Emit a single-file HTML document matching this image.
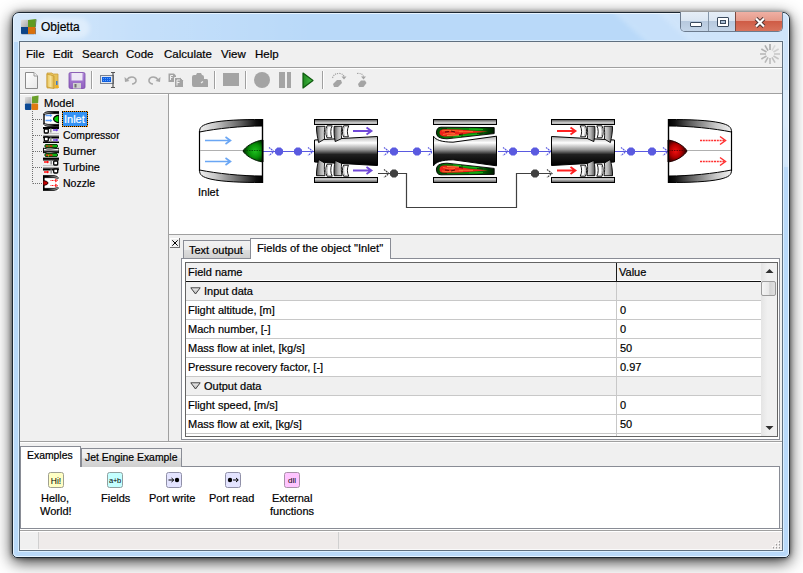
<!DOCTYPE html>
<html><head><meta charset="utf-8">
<style>
*{box-sizing:border-box}
html,body{margin:0;padding:0;width:803px;height:573px;overflow:hidden;background:#fff;font-family:"Liberation Sans",sans-serif;font-size:11px;color:#000}
.a{position:absolute}
.t{position:absolute;white-space:pre;line-height:1;-webkit-text-stroke:0.2px #000}
#shadow{left:12px;top:12px;width:778px;height:546px;border-radius:7px 7px 5px 5px;box-shadow:0 0 4px 0 rgba(0,0,0,0.5),0 4px 16px 0 rgba(0,0,0,0.8)}
#win{left:12px;top:12px;width:778px;height:546px;border:1px solid #1c2630;border-radius:7px 7px 5px 5px;background:#b9d9f9;overflow:hidden}
#win .hl{left:0;top:0;right:0;bottom:0;border:1px solid #e6f3ff;border-radius:6px 6px 4px 4px}
#client{left:19px;top:41px;width:764px;height:510px;border:1px solid #5f6f7f;background:#f0f0f0}
.hline{position:absolute;height:1px}
.vline{position:absolute;width:1px}
</style></head><body>
<div id="shadow" class="a"></div>
<div id="win" class="a"><div class="a hl"></div>
<div class="a" style="left:1px;top:1px;width:300px;height:28px;background:linear-gradient(90deg,rgba(255,255,255,0.42),rgba(255,255,255,0.18) 40%,rgba(255,255,255,0))"></div>
<div class="a" style="left:23px;top:5px;width:54px;height:20px;border-radius:10px;background:rgba(255,255,255,0.35);filter:blur(2px)"></div>
<svg class="a" style="left:-13px;top:-13px" width="803" height="573" viewBox="0 0 803 573"><defs><filter id="fb" x="-20%" y="-20%" width="140%" height="140%"><feGaussianBlur stdDeviation="2"/></filter></defs>
<polygon points="606,6 806,6 806,184" fill="#fff" opacity="0.2" filter="url(#fb)"/>
<polygon points="650,6 806,6 806,148" fill="#fff" opacity="0.15" filter="url(#fb)"/>
<rect x="782" y="90" width="8" height="77" fill="#fff" opacity="0.25"/>
</svg>
<div class="a" style="left:5px;top:27px;width:766px;height:512px;border:1px solid #dbeefe"></div>
</div>
<div id="client" class="a"></div>
<!-- title -->
<div class="t" style="left:41px;top:21px;font-size:12px;color:#000">Objetta</div>
<!-- menu -->
<div class="t" style="left:26px;top:49px;font-size:11.5px">File</div>
<div class="t" style="left:53px;top:49px;font-size:11.5px">Edit</div>
<div class="t" style="left:82px;top:49px;font-size:11.5px">Search</div>
<div class="t" style="left:126px;top:49px;font-size:11.5px">Code</div>
<div class="t" style="left:164px;top:49px;font-size:11.5px">Calculate</div>
<div class="t" style="left:221px;top:49px;font-size:11.5px">View</div>
<div class="t" style="left:255px;top:49px;font-size:11.5px">Help</div>
<div class="hline" style="left:20px;top:67px;width:762px;background:#a0a0a0"></div>
<div class="hline" style="left:20px;top:68px;width:762px;background:#fff"></div>
<div class="hline" style="left:20px;top:93px;width:762px;background:#a0a0a0"></div>
<div class="hline" style="left:20px;top:94px;width:762px;background:#fff"></div>
<!-- canvas -->
<div class="a" style="left:168px;top:94px;width:614px;height:141px;background:#fff;border-left:1px solid #a0a0a0;border-bottom:1px solid #a0a0a0"></div>
<div class="vline" style="left:168px;top:235px;height:206px;background:#a0a0a0"></div>
<div class="hline" style="left:20px;top:441px;width:762px;background:#a0a0a0"></div>
<div class="hline" style="left:20px;top:442px;width:762px;background:#fff"></div>
<!-- status bar -->
<div class="hline" style="left:20px;top:528px;width:762px;background:#a0a0a0"></div>

<!-- app icon -->
<svg class="a" style="left:20px;top:18px" width="17" height="17" viewBox="0 0 17 17">
<defs><linearGradient id="gq" x1="0" y1="0" x2="1" y2="1"><stop offset="0" stop-color="#e0e0e0"/><stop offset="1" stop-color="#a8a8a8"/></linearGradient></defs>
<path d="M1 2.5 Q1 1.8 1.8 1.8 H8 V9 H1 Z" fill="url(#gq)"/>
<path d="M8 2 L15.8 1 L15.2 9 L8 9 Z" fill="#5e9a22"/>
<path d="M15.8 1 L16.4 1.6 L15.8 9.5 L15.2 9 Z" fill="#3a5a18"/>
<path d="M1 9 H8 V16 H1.8 Q1 16 1 15.2 Z" fill="#0c4488"/>
<path d="M8 9 H15.2 V15.2 Q15.2 16 14.4 16 H8 Z" fill="#d8700c"/>
<path d="M15.2 9.5 L15.9 10 V16 L15.2 16.5 Z" fill="#7a4a20"/>
<path d="M1.5 16.3 H14.5" stroke="#5a6a80" stroke-width="0.6" opacity="0.6"/>
</svg>
<!-- caption buttons -->
<div class="a" style="left:680px;top:12px;width:103px;height:20px;border:1px solid #6c7b8e;border-top:none;border-radius:0 0 5px 5px;overflow:hidden">
 <div class="a" style="left:0;top:0;width:28px;height:19px;background:linear-gradient(#e6eef7 0,#dbe6f2 45%,#b7c9de 50%,#c4d5e8 100%);border-right:1px solid #8495a8"></div>
 <div class="a" style="left:28px;top:0;width:27px;height:19px;background:linear-gradient(#e6eef7 0,#dbe6f2 45%,#b7c9de 50%,#c4d5e8 100%);border-right:1px solid #7a4a40"></div>
 <div class="a" style="left:55px;top:0;width:47px;height:19px;background:linear-gradient(#efb0a4 0,#e59a8a 45%,#cf5c46 50%,#d8735c 100%)"></div>
 <div class="a" style="left:9px;top:10px;width:12px;height:5px;background:#fff;border:1px solid #3a4a5e;border-radius:1px"></div>
 <div class="a" style="left:36px;top:5px;width:12px;height:10px;background:#fff;border:1px solid #3a4a5e;border-radius:1px"><div class="a" style="left:2px;top:2px;width:6px;height:4px;background:#a9bdd3;border:1px solid #3a4a5e"></div></div>
 <svg class="a" style="left:73px;top:5px" width="12" height="11" viewBox="0 0 12 11"><path d="M2 1.5 L10 9.5 M10 1.5 L2 9.5" stroke="#4a3030" stroke-width="4" stroke-linecap="butt"/><path d="M2 1.5 L10 9.5 M10 1.5 L2 9.5" stroke="#fff" stroke-width="2.2" stroke-linecap="butt"/></svg>
</div>
<!-- spinner -->
<svg class="a" style="left:759px;top:43px" width="22" height="22" viewBox="-11 -11 22 22">
<g stroke-width="1.6" stroke-linecap="butt">
<line x1="0" y1="-4" x2="0" y2="-10" stroke="#a8a8a8" transform="rotate(0)"/>
<line x1="0" y1="-4" x2="0" y2="-10" stroke="#d8d8d8" transform="rotate(30)"/>
<line x1="0" y1="-4" x2="0" y2="-10" stroke="#d0d0d0" transform="rotate(60)"/>
<line x1="0" y1="-4" x2="0" y2="-10" stroke="#c8c8c8" transform="rotate(90)"/>
<line x1="0" y1="-4" x2="0" y2="-10" stroke="#c4c4c4" transform="rotate(120)"/>
<line x1="0" y1="-4" x2="0" y2="-10" stroke="#c0c0c0" transform="rotate(150)"/>
<line x1="0" y1="-4" x2="0" y2="-10" stroke="#bcbcbc" transform="rotate(180)"/>
<line x1="0" y1="-4" x2="0" y2="-10" stroke="#b8b8b8" transform="rotate(210)"/>
<line x1="0" y1="-4" x2="0" y2="-10" stroke="#b4b4b4" transform="rotate(240)"/>
<line x1="0" y1="-4" x2="0" y2="-10" stroke="#b8b8b8" transform="rotate(270)"/>
<line x1="0" y1="-4" x2="0" y2="-10" stroke="#b0b0b0" transform="rotate(300)"/>
<line x1="0" y1="-4" x2="0" y2="-10" stroke="#acacac" transform="rotate(330)"/>
</g></svg>

<!-- toolbar -->
<svg class="a" style="left:24px;top:72px" width="15" height="17" viewBox="0 0 15 17">
<defs><linearGradient id="gdoc" x1="0" y1="0" x2="1" y2="1"><stop offset="0" stop-color="#fff"/><stop offset="1" stop-color="#e8e8e8"/></linearGradient></defs>
<path d="M1.5 0.5 H10 L13.5 4 V16.5 H1.5 Z" fill="url(#gdoc)" stroke="#8a8a8a"/>
<path d="M10 0.5 V4 H13.5" fill="#f4f4f4" stroke="#9a9a9a"/>
</svg>
<svg class="a" style="left:46px;top:72px" width="15" height="17" viewBox="0 0 15 17">
<defs><linearGradient id="gfold" x1="0" y1="0" x2="1" y2="0"><stop offset="0" stop-color="#e8c45a"/><stop offset="0.5" stop-color="#f6e29a"/><stop offset="1" stop-color="#d9ae40"/></linearGradient></defs>
<path d="M1 1 H6 L7 2 H12 V16 H1 Z" fill="#e6c25a" stroke="#caa040" stroke-width="0.8"/>
<path d="M1 2 L8 4 V16.5 L1 15 Z" fill="url(#gfold)" stroke="#c89a30" stroke-width="0.8"/>
<rect x="10" y="9" width="1.5" height="5" fill="#3a7ad0"/><path d="M9 13 L12 13 L13 16 L10 16 Z" fill="#f0b020"/>
</svg>
<svg class="a" style="left:68px;top:72px" width="18" height="17" viewBox="0 0 18 17">
<defs><linearGradient id="gfl" x1="0" y1="0" x2="0" y2="1"><stop offset="0" stop-color="#b088d8"/><stop offset="1" stop-color="#9060c0"/></linearGradient></defs>
<rect x="1" y="0.5" width="16" height="16" rx="1.5" fill="url(#gfl)" stroke="#7a4aa8" stroke-width="0.8"/>
<rect x="3.5" y="1" width="11" height="7.5" fill="#eee8f6"/>
<rect x="5" y="11" width="8" height="5.5" fill="#d0d0d0"/><rect x="6.5" y="12" width="2" height="3.5" fill="#707070"/>
</svg>
<div class="vline" style="left:91px;top:71px;height:18px;background:#a0a0a0"></div>
<div class="vline" style="left:92px;top:71px;height:18px;background:#fff"></div>
<svg class="a" style="left:100px;top:72px" width="17" height="16" viewBox="0 0 17 16">
<rect x="0.5" y="3.5" width="13" height="8" fill="#e0e6f0" stroke="#7a8290"/>
<rect x="2" y="5" width="9" height="5" fill="#1060e0"/>
<path d="M3 6.5 H10 M3 8.5 H10" stroke="#6aa8ff" stroke-width="0.8" stroke-dasharray="1 1"/>
<path d="M11 0.5 H15 M13 0.5 V15.5 M11 15.5 H15" stroke="#555" stroke-width="1.2" fill="none"/>
</svg>
<svg class="a" style="left:124px;top:75px" width="14" height="10" viewBox="0 0 14 10">
<path d="M3 5 C5 1 11 1 12 5 C12.5 7.5 10 9 8 9" stroke="#a8a8a8" stroke-width="1.6" fill="none"/>
<path d="M0.5 2 L1 7 L5.5 6 Z" fill="#a8a8a8"/>
</svg>
<svg class="a" style="left:147px;top:75px" width="14" height="10" viewBox="0 0 14 10">
<path d="M11 5 C9 1 3 1 2 5 C1.5 7.5 4 9 6 9" stroke="#a8a8a8" stroke-width="1.6" fill="none"/>
<path d="M13.5 2 L13 7 L8.5 6 Z" fill="#a8a8a8"/>
</svg>
<svg class="a" style="left:168px;top:73px" width="17" height="15" viewBox="0 0 17 15">
<path d="M0.5 0.5 H6 L8 2.5 V9 H0.5 Z" fill="#a4a4a4"/>
<path d="M6.5 4.5 H12.5 L15.5 7.5 V14.5 H6.5 Z" fill="#a4a4a4" stroke="#f0f0f0" stroke-width="1"/>
<path d="M2.5 2.5 H5 M2.5 2.5 V7 M2.5 4.5 H4.5" stroke="#f0f0f0" stroke-width="1"/>
<path d="M9 7 H12 M9 7 V12.5 M9 9.5 H11.5" stroke="#f0f0f0" stroke-width="1"/>
</svg>
<svg class="a" style="left:191px;top:73px" width="18" height="15" viewBox="0 0 18 15">
<path d="M1 4 Q1 2 3 2 H5 L6 0 H10 L11 2 Q13 2 13 4 V6 H16 Q17 6 17 8 V14 H3 Q1 14 1 12 Z" fill="#a4a4a4"/>
<path d="M10 10 L12 8.5" stroke="#f0f0f0" stroke-width="1.2"/>
</svg>
<div class="vline" style="left:214px;top:71px;height:18px;background:#a0a0a0"></div>
<div class="vline" style="left:215px;top:71px;height:18px;background:#fff"></div>
<div class="a" style="left:223px;top:73px;width:16px;height:13px;background:#a4a4a4"></div>
<div class="vline" style="left:245px;top:71px;height:18px;background:#a0a0a0"></div>
<div class="vline" style="left:246px;top:71px;height:18px;background:#fff"></div>
<div class="a" style="left:254px;top:72px;width:16px;height:16px;border-radius:50%;background:#a4a4a4"></div>
<div class="a" style="left:279px;top:72px;width:6px;height:16px;background:#a4a4a4"></div>
<div class="a" style="left:287px;top:72px;width:4px;height:16px;background:#a4a4a4"></div>
<svg class="a" style="left:302px;top:72px" width="12" height="17" viewBox="0 0 12 17">
<defs><linearGradient id="gplay" x1="0" y1="0" x2="1" y2="0"><stop offset="0" stop-color="#1e8a1e"/><stop offset="1" stop-color="#4cc04c"/></linearGradient></defs>
<path d="M1 1 L11 8.5 L1 16 Z" fill="url(#gplay)" stroke="#0e5a0e" stroke-width="1.2" stroke-linejoin="round"/>
</svg>
<div class="vline" style="left:322px;top:71px;height:18px;background:#a0a0a0"></div>
<div class="vline" style="left:323px;top:71px;height:18px;background:#fff"></div>
<svg class="a" style="left:331px;top:72px" width="16" height="16" viewBox="0 0 16 16">
<path d="M1.5 6 Q3 1 9 1.5 Q12.5 2 13 5" stroke="#a4a4a4" stroke-width="1.2" stroke-dasharray="1.2 1" fill="none"/>
<path d="M10.5 4.5 L13 7.5 L15.5 4.5 Z" fill="#a4a4a4"/>
<path d="M2 12 L6 8 H10 L11 11 L7 15 H3 Z" fill="#a4a4a4"/>
</svg>
<svg class="a" style="left:356px;top:72px" width="12" height="16" viewBox="0 0 12 16">
<path d="M1 1.5 Q7 1 7.5 5" stroke="#a4a4a4" stroke-width="1.2" stroke-dasharray="1.2 1" fill="none"/>
<path d="M5 4.5 L7.5 7.5 L10 4.5 Z" fill="#a4a4a4"/>
<path d="M2 12 L5 8.5 H9 L10.5 11 L7.5 15 H3 Z" fill="#a4a4a4"/>
</svg>

<!-- symbols -->
<svg width="0" height="0" style="position:absolute">
<defs>
<linearGradient id="gband" x1="0" y1="0" x2="1" y2="0"><stop offset="0" stop-color="#f0f0f0"/><stop offset="0.25" stop-color="#c8c8c8"/><stop offset="0.65" stop-color="#606060"/><stop offset="0.9" stop-color="#101010"/><stop offset="1" stop-color="#000"/></linearGradient>
<linearGradient id="gbandr" x1="1" y1="0" x2="0" y2="0"><stop offset="0" stop-color="#f0f0f0"/><stop offset="0.25" stop-color="#c8c8c8"/><stop offset="0.65" stop-color="#606060"/><stop offset="0.9" stop-color="#101010"/><stop offset="1" stop-color="#000"/></linearGradient>
<radialGradient id="gcone" cx="0.6" cy="0.5" r="0.55"><stop offset="0" stop-color="#20c020"/><stop offset="0.55" stop-color="#089008"/><stop offset="1" stop-color="#003000"/></radialGradient>
<radialGradient id="gconer" cx="0.4" cy="0.5" r="0.55"><stop offset="0" stop-color="#f01010"/><stop offset="0.55" stop-color="#b00000"/><stop offset="1" stop-color="#300000"/></radialGradient>
<linearGradient id="gbar" x1="0" y1="0" x2="0" y2="1"><stop offset="0" stop-color="#505050"/><stop offset="0.7" stop-color="#d8d8d8"/><stop offset="1" stop-color="#909090"/></linearGradient>
<linearGradient id="gbarb" x1="0" y1="1" x2="0" y2="0"><stop offset="0" stop-color="#505050"/><stop offset="0.7" stop-color="#d8d8d8"/><stop offset="1" stop-color="#909090"/></linearGradient>
<linearGradient id="ghub" x1="0" y1="0" x2="0" y2="1"><stop offset="0" stop-color="#b0b0b0"/><stop offset="0.22" stop-color="#ffffff"/><stop offset="0.45" stop-color="#9a9a9a"/><stop offset="0.62" stop-color="#202020"/><stop offset="1" stop-color="#000"/></linearGradient>
<linearGradient id="gpod" x1="0" y1="0" x2="1" y2="0"><stop offset="0" stop-color="#004000"/><stop offset="0.15" stop-color="#087808"/><stop offset="0.7" stop-color="#0a8a0a"/><stop offset="0.9" stop-color="#003a00"/><stop offset="1" stop-color="#001a00"/></linearGradient>
<linearGradient id="gblade" x1="0" y1="0" x2="1" y2="0"><stop offset="0" stop-color="#505050"/><stop offset="0.5" stop-color="#b0b0b0"/><stop offset="1" stop-color="#e0e0e0"/></linearGradient>
<symbol id="sInlet" viewBox="0 0 64 64" overflow="visible">
<rect x="0.5" y="8" width="63" height="48" fill="#fff"/>
<path d="M0.5 12 V52" stroke="#000" stroke-width="1.2"/>
<path d="M1 31.5 H46" stroke="#b0b0b0" stroke-width="1"/>
<path d="M6 21.5 H31 M26.5 18 L31.5 21.5 L26.5 25 M6 42.5 H31 M26.5 39 L31.5 42.5 L26.5 46" stroke="#6aa6f4" stroke-width="1.6" fill="none"/>
<path d="M64 21 C55 22 46 28 44 32 C46 36 55 42 64 43 Z" fill="url(#gcone)" stroke="#001800" stroke-width="1"/><path d="M45 31.5 H63" stroke="#004000" stroke-width="0.8" stroke-dasharray="1.5 1"/>
<path d="M0.5 13 C0.5 8 3 6 12 3.8 C24 1.2 42 0.5 63.5 0.5 V7 C42 7 18 9.5 0.5 13 Z" fill="url(#gband)" stroke="#000" stroke-width="1"/>
<path d="M0.5 51 C0.5 56 3 58 12 60.2 C24 62.8 42 63.5 63.5 63.5 V57 C42 57 18 54.5 0.5 51 Z" fill="url(#gband)" stroke="#000" stroke-width="1"/>
<path d="M63.5 0 V64" stroke="#000" stroke-width="1.4"/>
</symbol>
<symbol id="sNozzle" viewBox="0 0 64 64" overflow="visible">
<rect x="0.5" y="8" width="63" height="48" fill="#fff"/>
<path d="M63.5 12 V52" stroke="#000" stroke-width="1.2"/>
<path d="M18 31.5 H63" stroke="#b0b0b0" stroke-width="1"/>
<path d="M32 21.5 H57 M32 42.5 H57" stroke="#ff3030" stroke-width="1.5" stroke-dasharray="2 0.8" fill="none"/><path d="M52 17.5 L57.5 21.5 L52 25.5 M52 38.5 L57.5 42.5 L52 46.5" stroke="#ff3030" stroke-width="1.5" fill="none"/>
<path d="M0 21 C9 22 17 28 19 32 C17 36 9 42 0 43 Z" fill="url(#gconer)" stroke="#200000" stroke-width="1"/><path d="M1 31.5 H18" stroke="#500000" stroke-width="0.8" stroke-dasharray="1.5 1"/>
<path d="M63.5 13 C63.5 8 61 6 52 3.8 C40 1.2 22 0.5 0.5 0.5 V7 C22 7 46 9.5 63.5 13 Z" fill="url(#gbandr)" stroke="#000" stroke-width="1"/>
<path d="M63.5 51 C63.5 56 61 58 52 60.2 C40 62.8 22 63.5 0.5 63.5 V57 C22 57 46 54.5 63.5 51 Z" fill="url(#gbandr)" stroke="#000" stroke-width="1"/>
<path d="M0.5 0 V64" stroke="#000" stroke-width="1.4"/>
</symbol>
<g id="bladesC">
<path d="M2.5 7.3 H11 C10.2 11 10.2 16 10.6 20 L4.6 23.6 C3.4 18 2.2 12 2.5 7.3 Z" fill="url(#gblade)" stroke="#000" stroke-width="0.9"/>
<path d="M13 6.8 H18.2 C16.4 10 16.4 15 17.8 18.8 H13 C11.4 15 11.4 10 13 6.8 Z" fill="#f8f8f8" stroke="#000" stroke-width="0.9"/><path d="M13.8 8 C12.8 11 12.8 14.5 13.8 17.6" stroke="#b0b0b0" stroke-width="1" fill="none"/>
<path d="M20.2 7.3 H28 C27.2 11 27.2 15.5 27.6 19.6 L21.2 22.6 C20 17.5 19.8 12 20.2 7.3 Z" fill="url(#gblade)" stroke="#000" stroke-width="0.9"/>
<path d="M29.6 6.8 H34.8 C33 10 33 14.5 34.4 17.8 H29.6 C28 14.5 28 10 29.6 6.8 Z" fill="#f8f8f8" stroke="#000" stroke-width="0.9"/><path d="M30.4 8 C29.4 11 29.4 14 30.4 16.8" stroke="#b0b0b0" stroke-width="1" fill="none"/>
</g>
<symbol id="sComp" viewBox="0 0 64 64" overflow="visible">
<path d="M0.5 21 L63.5 17.5 V46.5 L0.5 43 Z" fill="url(#ghub)" stroke="#000" stroke-width="1"/>
<use href="#bladesC"/>
<use href="#bladesC" transform="matrix(1 0 0 -1 0 64)"/>
<rect x="0.5" y="0.5" width="63" height="5" fill="url(#gbar)" stroke="#000" stroke-width="1"/>
<rect x="0.5" y="58.5" width="63" height="5" fill="url(#gbarb)" stroke="#000" stroke-width="1"/>
</symbol>
<symbol id="sTurb" viewBox="0 0 64 64" overflow="visible">
<g transform="matrix(-1 0 0 1 64 0)">
<path d="M0.5 21 L63.5 17.5 V46.5 L0.5 43 Z" fill="url(#ghub)" stroke="#000" stroke-width="1"/>
<use href="#bladesC"/>
<use href="#bladesC" transform="matrix(1 0 0 -1 0 64)"/>
</g>
<rect x="0.5" y="0.5" width="63" height="5" fill="url(#gbar)" stroke="#000" stroke-width="1"/>
<rect x="0.5" y="58.5" width="63" height="5" fill="url(#gbarb)" stroke="#000" stroke-width="1"/>
</symbol>
<g id="pod">
<path d="M8 8.2 L61.2 8.6 V14.6 L14 19.8 Q3.4 19.8 3.4 14 Q3.4 8.2 8 8.2 Z" fill="url(#gpod)" stroke="#000" stroke-width="0.9"/>
<path d="M30 16.5 L46 15 M36 10 L50 10.5 M20 18 L28 17.6" stroke="#20c020" stroke-width="1.2" opacity="0.8"/><path d="M8 10 L14 9.6 M44 14.5 L50 14" stroke="#002000" stroke-width="1" opacity="0.7"/>
<path d="M6.5 13.8 Q6.5 10.2 11 10.2 L26 10.4 Q40 11.5 55 12.8 L36 14.2 Q28 15.5 20 17.2 L11.5 17.4 Q6.5 17.2 6.5 13.8 Z" fill="#f02018"/>
<path d="M9 12 Q14 10.8 20 11.6 T30 12 M10 15.5 Q15 13.5 22 14.5 M26 12.8 L40 12.6" stroke="#ffa040" stroke-width="0.6" fill="none"/>
<path d="M12 13 L16 12.6 M26 15.6 L30 15 M18 12 L22 13" stroke="#300000" stroke-width="0.8" fill="none"/>
<path d="M14 16.4 Q20 15.8 26 16.2" stroke="#ffe060" stroke-width="0.6" fill="none"/>
</g>
<symbol id="sBurn" viewBox="0 0 64 64" overflow="visible">
<use href="#pod"/>
<use href="#pod" transform="matrix(1 0 0 -1 0 64)"/>
<path d="M0.5 17.2 C3 21 8 23 20 23.2 L63.5 17.2 V46.8 L20 40.8 C8 41 3 43 0.5 46.8 Z" fill="url(#ghub)" stroke="#fff" stroke-width="3"/>
<path d="M0.5 17.2 C3 21 8 23 20 23.2 L63.5 17.2 V46.8 L20 40.8 C8 41 3 43 0.5 46.8 Z" fill="url(#ghub)" stroke="#000" stroke-width="1"/>
<rect x="0.5" y="0.5" width="63" height="5" fill="url(#gbar)" stroke="#000" stroke-width="1"/>
<rect x="0.5" y="58.5" width="63" height="5" fill="url(#gbarb)" stroke="#000" stroke-width="1"/>
</symbol>
<g id="dotB"><path d="M-1.7 -4 H1.7 L4 -1.7 V1.7 L1.7 4 H-1.7 L-4 1.7 V-1.7 Z" fill="#5a5ae0"/></g>
<g id="dotK"><path d="M-1.7 -4 H1.7 L4 -1.7 V1.7 L1.7 4 H-1.7 L-4 1.7 V-1.7 Z" fill="#404040"/></g>
<g id="arrB"><path d="M-5 -4 L0 0 L-5 4" stroke="#5a5ae0" stroke-width="1.2" fill="none" stroke-dasharray="1.8 0.7"/></g>
<g id="arrK"><path d="M-5 -4 L0 0 L-5 4" stroke="#404040" stroke-width="1.2" fill="none" stroke-dasharray="1.8 0.7"/></g>
</defs></svg>
<!-- diagram -->
<svg class="a" style="left:169px;top:94px" width="613" height="140" viewBox="169 94 613 140">
<path d="M263 151.5 H314 M378 151.5 H433 M497 151.5 H551 M615 151.5 H668" stroke="#5a5ae0" stroke-width="1.2"/>
<path d="M378 173.5 H406.5 V207.5 H516.5 V173.5 H551" stroke="#404040" stroke-width="1.2" fill="none"/>
<use href="#arrB" x="274" y="151.5"/><use href="#dotB" x="279" y="151.5"/><use href="#dotB" x="298" y="151.5"/><use href="#arrB" x="313" y="151.5"/>
<use href="#arrB" x="389" y="151.5"/><use href="#dotB" x="394" y="151.5"/><use href="#dotB" x="417" y="151.5"/><use href="#arrB" x="433" y="151.5"/>
<use href="#arrB" x="508" y="151.5"/><use href="#dotB" x="513" y="151.5"/><use href="#dotB" x="535" y="151.5"/><use href="#arrB" x="551" y="151.5"/>
<use href="#arrB" x="626" y="151.5"/><use href="#dotB" x="631" y="151.5"/><use href="#dotB" x="652" y="151.5"/><use href="#arrB" x="668" y="151.5"/>
<use href="#arrK" x="389" y="173.5"/><use href="#dotK" x="394" y="173.5"/><use href="#dotK" x="535" y="173.5"/><use href="#arrK" x="552" y="173.5"/>
<use href="#sInlet" x="199" y="119" width="64" height="64"/>
<use href="#sComp" x="314" y="119" width="64" height="64"/>
<use href="#sBurn" x="433" y="119" width="64" height="64"/>
<use href="#sTurb" x="551" y="119" width="64" height="64"/>
<use href="#sNozzle" x="668" y="119" width="64" height="64"/>
<path d="M353 131 H371 M366.5 127.5 L371.5 131 L366.5 134.5 M353 170.5 H371 M366.5 167 L371.5 170.5 L366.5 174" stroke="#7048d8" stroke-width="1.8" fill="none"/>
<path d="M557 131 H575 M570.5 127.5 L575.5 131 L570.5 134.5 M557 170.5 H575 M570.5 167 L575.5 170.5 L570.5 174" stroke="#ff2020" stroke-width="1.8" fill="none"/>
</svg>
<div class="t" style="left:198px;top:187px;font-size:11px">Inlet</div>

<!-- tree -->
<svg class="a" style="left:24px;top:95px" width="16" height="16" viewBox="0 0 17 17">
<rect x="1" y="2" width="7" height="7" rx="1" fill="url(#gq)"/>
<path d="M8.5 1.5 L15.5 0.5 L15 8.5 L8.5 9 Z" fill="#6aa02a"/>
<rect x="1" y="9" width="7" height="7" rx="1" fill="#0d4a94"/>
<rect x="8" y="9" width="7" height="7" rx="1" fill="#e07a10"/>
</svg>
<div class="t" style="left:44px;top:98px;font-size:11px">Model</div>
<svg class="a" style="left:32px;top:111px" width="12" height="74" viewBox="0 0 12 74">
<path d="M0.5 0 V72.5 M1 8.5 H11 M1 24.5 H11 M1 40.5 H11 M1 56.5 H11 M1 72.5 H11" stroke="#707070" stroke-width="1" stroke-dasharray="1 1" fill="none"/>
</svg>
<svg class="a" style="left:43px;top:111px" width="16" height="16" viewBox="0 0 16 16">
<defs><linearGradient id="tb1" x1="0" y1="0" x2="1" y2="0"><stop offset="0" stop-color="#d0d0d0"/><stop offset="0.4" stop-color="#606060"/><stop offset="0.7" stop-color="#000"/></linearGradient>
<linearGradient id="thub" x1="0" y1="0" x2="0" y2="1"><stop offset="0" stop-color="#b0b0b0"/><stop offset="0.3" stop-color="#f4f4f4"/><stop offset="0.55" stop-color="#707070"/><stop offset="0.8" stop-color="#000"/></linearGradient></defs>
<rect x="0" y="0" width="16" height="16" fill="#fff"/>
<path d="M0.5 3 Q1 1 5 0.6 H16 V2.6 H5 Q2 3 1.5 4 Z" fill="url(#tb1)" stroke="#000" stroke-width="0.8"/>
<path d="M0.5 13 Q1 15 5 15.4 H16 V13.4 H5 Q2 13 1.5 12 Z" fill="url(#tb1)" stroke="#000" stroke-width="0.8"/>
<path d="M1 3 V13" stroke="#000" stroke-width="1.4"/>
<path d="M2.5 4.5 H8.5 M2.5 9.5 H8.5" stroke="#60a0f8" stroke-width="1.6"/>
<path d="M7 3 L9.5 4.5 L7 6 Z M7 8 L9.5 9.5 L7 11 Z" fill="#60a0f8"/>
<path d="M16 4.2 Q11 5 10.6 8 Q11 11 16 11.8 Z" fill="#00d000" stroke="#000" stroke-width="1.3"/>
</svg>
<svg class="a" style="left:43px;top:127px" width="16" height="16" viewBox="0 0 16 16">
<rect x="0" y="0" width="16" height="2" fill="#000"/>
<rect x="0" y="14.5" width="16" height="1.5" fill="#000"/>
<path d="M0 6.8 L1 6 H16 V11.5 H1 L0 10.7 Z" fill="url(#thub)"/>
<rect x="1.3" y="2" width="4" height="4" rx="0.8" fill="#fff" stroke="#000" stroke-width="1.3"/>
<rect x="1.3" y="10" width="4" height="4" rx="0.8" fill="#fff" stroke="#000" stroke-width="1.3"/>
<rect x="7" y="1.5" width="1.6" height="4" fill="#909090"/>
<rect x="7" y="10.5" width="1.6" height="4" fill="#909090"/>
<path d="M10 3 H14.5 M10 13 H14.5" stroke="#7040e0" stroke-width="1.6"/>
<path d="M13 1.5 L15.5 3 L13 4.5 Z M13 11.5 L15.5 13 L13 14.5 Z" fill="#7040e0"/>
</svg>
<svg class="a" style="left:43px;top:143px" width="16" height="16" viewBox="0 0 16 16">
<path d="M2.5 1.5 H14 Q15.5 3 14 4.5 H2.5 Q1 3 2.5 1.5 Z" fill="#10b010" stroke="#003000" stroke-width="0.9"/>
<path d="M2.5 10.5 H14 Q15.5 12 14 13.5 H2.5 Q1 12 2.5 10.5 Z" fill="#10b010" stroke="#003000" stroke-width="0.9"/>
<rect x="3" y="2.5" width="2.5" height="1.2" fill="#ff1010"/><rect x="6.5" y="2.4" width="3" height="1.4" fill="#ff1010"/>
<rect x="3" y="11.4" width="2.5" height="1.4" fill="#ff1010"/><rect x="6.5" y="11.4" width="3" height="1.4" fill="#ff1010"/><rect x="5" y="12.4" width="1" height="1" fill="#ffe000"/>
<path d="M0.5 5 Q4 6.5 8 6 L16 5.2 V9.8 L8 9 Q4 8.5 0.5 10 Z" fill="url(#thub)" stroke="#000" stroke-width="0.9"/>
<rect x="0" y="14.6" width="16" height="1.4" fill="#000"/>
</svg>
<svg class="a" style="left:43px;top:159px" width="16" height="16" viewBox="0 0 16 16">
<rect x="0" y="0" width="16" height="1.6" fill="#202020"/>
<path d="M0 6 H15 L16 6.8 V10.7 L15 11.5 H0 Z" fill="url(#thub)"/>
<rect x="10.7" y="2" width="4" height="4" rx="0.8" fill="#fff" stroke="#000" stroke-width="1.3"/>
<rect x="10.7" y="10" width="4" height="4" rx="0.8" fill="#fff" stroke="#000" stroke-width="1.3"/>
<rect x="7.4" y="1.5" width="1.6" height="4" fill="#909090"/>
<rect x="7.4" y="10.5" width="1.6" height="4" fill="#909090"/>
<path d="M1 3 H5 M1 13 H5" stroke="#ff1010" stroke-width="1.6"/>
<path d="M4 1.5 L6.3 3 L4 4.5 Z M4 11.5 L6.3 13 L4 14.5 Z" fill="#ff1010"/>
</svg>
<svg class="a" style="left:43px;top:175px" width="16" height="16" viewBox="0 0 16 16">
<defs><linearGradient id="tb2" x1="1" y1="0" x2="0" y2="0"><stop offset="0" stop-color="#d0d0d0"/><stop offset="0.4" stop-color="#606060"/><stop offset="0.7" stop-color="#000"/></linearGradient></defs>
<rect x="0" y="0" width="16" height="16" fill="#fff"/>
<path d="M15.5 3 Q15 1 11 0.6 H0 V2.6 H11 Q14 3 14.5 4 Z" fill="url(#tb2)" stroke="#000" stroke-width="0.8"/>
<path d="M15.5 13 Q15 15 11 15.4 H0 V13.4 H11 Q14 13 14.5 12 Z" fill="url(#tb2)" stroke="#000" stroke-width="0.8"/>
<path d="M0.8 2 V14" stroke="#000" stroke-width="1.6"/>
<path d="M0 5.5 Q5 6 5.2 8 Q5 10 0 10.5 Z" fill="#c00000" stroke="#000" stroke-width="0.8"/>
<path d="M7.5 5.5 H13.5 M7.5 10.5 H13.5" stroke="#ff2020" stroke-width="1.2" stroke-dasharray="1 0.5"/>
<path d="M12 4 L14.5 5.5 L12 7 M12 9 L14.5 10.5 L12 12" stroke="#ff2020" stroke-width="1" fill="none"/>
</svg>
<svg class="a" style="left:62px;top:111px" width="26" height="16" viewBox="0 0 26 16"><rect x="0.5" y="0.5" width="25" height="15" fill="#3492f4" stroke="#000" stroke-width="1" shape-rendering="crispEdges"/><rect x="0.5" y="0.5" width="25" height="15" fill="none" stroke="#f0900c" stroke-width="1" stroke-dasharray="1 1" shape-rendering="crispEdges"/></svg>
<div class="t" style="left:64px;top:114px;font-size:11px;color:#fff;-webkit-text-stroke:0.2px #fff">Inlet</div>
<div class="t" style="left:63px;top:131px;font-size:10.4px">Compressor</div>
<div class="t" style="left:63px;top:146px;font-size:11px">Burner</div>
<div class="t" style="left:63px;top:162px;font-size:11px">Turbine</div>
<div class="t" style="left:63px;top:178px;font-size:10.5px">Nozzle</div>

<!-- tabs area -->
<div class="a" style="left:170px;top:238px;width:10px;height:10px;background:#f0f0f0;border-right:1px solid #707070;border-bottom:1px solid #707070;box-shadow:inset 1px 1px 0 #fff"></div>
<svg class="a" style="left:172px;top:240px" width="6" height="6" viewBox="0 0 6 6"><path d="M0.3 0.3 L5.7 5.7 M5.7 0.3 L0.3 5.7" stroke="#000" stroke-width="1"/></svg>
<div class="a" style="left:183px;top:240px;width:68px;height:19px;border:1px solid #898c95;border-bottom:none;background:linear-gradient(#f2f2f2 0,#ebebeb 50%,#dddddd 50%,#cfcfcf 100%)"></div>
<div class="t" style="left:189px;top:245px;font-size:11px">Text output</div>
<div class="a" style="left:181px;top:258px;width:599px;height:182px;border:1px solid #898c95;background:#fff"></div>
<div class="a" style="left:250px;top:238px;width:141px;height:21px;border:1px solid #898c95;border-bottom:none;background:#fff"></div>
<div class="t" style="left:257px;top:243px;font-size:11.2px">Fields of the object "Inlet"</div>
<!-- table -->
<div class="a" style="left:185px;top:262px;width:593px;height:175px;border:1px solid #646464;background:#fff;overflow:hidden">
 <div class="a" style="left:0;top:0;width:575px;height:19px;background:#f0f0f0;border-bottom:1px solid #111"><div class="a" style="left:0;top:17px;width:575px;height:1px;background:#fff"></div></div>
 <div class="vline" style="left:430px;top:0;height:19px;background:#1a1a1a"></div>
 <div class="t" style="left:2px;top:4px;font-size:11px">Field name</div>
 <div class="t" style="left:433px;top:4px;font-size:11px">Value</div>
</div>
<div class="a" style="left:186px;top:282px;width:575px;height:154px;overflow:hidden">
<div class="a" style="left:0px;top:0px;width:575px;height:19px;background:#f0f0f0;border-bottom:1px solid #c8c8c8"></div>
<div class="vline" style="left:430px;top:0px;height:19px;background:#c8c8c8"></div>
<svg class="a" style="left:4px;top:5px" width="11" height="8" viewBox="0 0 11 8"><defs><linearGradient id="gtri" x1="0" y1="0" x2="0" y2="1"><stop offset="0" stop-color="#f0f0f0"/><stop offset="1" stop-color="#b0b0b0"/></linearGradient></defs><path d="M0.8 0.8 H10.2 L5.5 7 Z" fill="url(#gtri)" stroke="#404040" stroke-width="1"/></svg>
<div class="t" style="left:18px;top:4px;font-size:11px">Input data</div>
<div class="a" style="left:0px;top:19px;width:575px;height:19px;background:#fff;border-bottom:1px solid #c8c8c8"></div>
<div class="vline" style="left:430px;top:19px;height:19px;background:#c8c8c8"></div>
<div class="t" style="left:2px;top:23px;font-size:11px">Flight altitude, [m]</div>
<div class="t" style="left:434px;top:23px;font-size:11px">0</div>
<div class="a" style="left:0px;top:38px;width:575px;height:19px;background:#fff;border-bottom:1px solid #c8c8c8"></div>
<div class="vline" style="left:430px;top:38px;height:19px;background:#c8c8c8"></div>
<div class="t" style="left:2px;top:42px;font-size:11px">Mach number, [-]</div>
<div class="t" style="left:434px;top:42px;font-size:11px">0</div>
<div class="a" style="left:0px;top:57px;width:575px;height:19px;background:#fff;border-bottom:1px solid #c8c8c8"></div>
<div class="vline" style="left:430px;top:57px;height:19px;background:#c8c8c8"></div>
<div class="t" style="left:2px;top:61px;font-size:11px">Mass flow at inlet, [kg/s]</div>
<div class="t" style="left:434px;top:61px;font-size:11px">50</div>
<div class="a" style="left:0px;top:76px;width:575px;height:19px;background:#fff;border-bottom:1px solid #c8c8c8"></div>
<div class="vline" style="left:430px;top:76px;height:19px;background:#c8c8c8"></div>
<div class="t" style="left:2px;top:80px;font-size:11px">Pressure recovery factor, [-]</div>
<div class="t" style="left:434px;top:80px;font-size:11px">0.97</div>
<div class="a" style="left:0px;top:95px;width:575px;height:19px;background:#f0f0f0;border-bottom:1px solid #c8c8c8"></div>
<div class="vline" style="left:430px;top:95px;height:19px;background:#c8c8c8"></div>
<svg class="a" style="left:4px;top:100px" width="11" height="8" viewBox="0 0 11 8"><defs><linearGradient id="gtri" x1="0" y1="0" x2="0" y2="1"><stop offset="0" stop-color="#f0f0f0"/><stop offset="1" stop-color="#b0b0b0"/></linearGradient></defs><path d="M0.8 0.8 H10.2 L5.5 7 Z" fill="url(#gtri)" stroke="#404040" stroke-width="1"/></svg>
<div class="t" style="left:18px;top:99px;font-size:11px">Output data</div>
<div class="a" style="left:0px;top:114px;width:575px;height:19px;background:#fff;border-bottom:1px solid #c8c8c8"></div>
<div class="vline" style="left:430px;top:114px;height:19px;background:#c8c8c8"></div>
<div class="t" style="left:2px;top:118px;font-size:11px">Flight speed, [m/s]</div>
<div class="t" style="left:434px;top:118px;font-size:11px">0</div>
<div class="a" style="left:0px;top:133px;width:575px;height:19px;background:#fff;border-bottom:1px solid #c8c8c8"></div>
<div class="vline" style="left:430px;top:133px;height:19px;background:#c8c8c8"></div>
<div class="t" style="left:2px;top:137px;font-size:11px">Mass flow at exit, [kg/s]</div>
<div class="t" style="left:434px;top:137px;font-size:11px">50</div>
<div class="a" style="left:0px;top:152px;width:575px;height:19px;background:#fff;border-bottom:1px solid #c8c8c8"></div>
<div class="vline" style="left:430px;top:152px;height:19px;background:#c8c8c8"></div>

</div>
<!-- scrollbar -->
<div class="a" style="left:761px;top:263px;width:16px;height:173px;background:linear-gradient(90deg,#e4e4e4,#f0f0f0 40%,#f0f0f0)"></div>
<svg class="a" style="left:765px;top:268px" width="9" height="6" viewBox="0 0 9 6"><path d="M0.5 5 L4.5 1 L8.5 5 Z" fill="#303030"/></svg>
<svg class="a" style="left:765px;top:425px" width="9" height="6" viewBox="0 0 9 6"><path d="M0.5 1 L4.5 5 L8.5 1 Z" fill="#303030"/></svg>
<div class="a" style="left:761px;top:281px;width:15px;height:15px;border:1px solid #9a9a9a;border-radius:2px;background:linear-gradient(90deg,#f4f4f4,#e8e8e8 50%,#d4d4d4 60%,#e0e0e0)"></div>

<!-- bottom panel -->
<div class="a" style="left:20px;top:466px;width:760px;height:63px;background:#fff;border:1px solid #898c95"></div>
<div class="a" style="left:81px;top:448px;width:101px;height:19px;border:1px solid #898c95;border-bottom:none;background:linear-gradient(#f2f2f2 0,#ebebeb 50%,#dddddd 50%,#cfcfcf 100%)"></div>
<div class="t" style="left:85px;top:453px;font-size:10.4px">Jet Engine Example</div>
<div class="a" style="left:20px;top:446px;width:61px;height:21px;border:1px solid #898c95;border-bottom:none;background:#fff"></div>
<div class="t" style="left:27px;top:451px;font-size:10.4px">Examples</div>
<svg class="a" style="left:48px;top:472px" width="16" height="16" viewBox="0 0 16 16"><rect x="0.5" y="0.5" width="15" height="15" rx="2" fill="#ffffc4" stroke="#a0a090"/><text x="8" y="11.5" text-anchor="middle" font-family="Liberation Sans" font-size="8.5" fill="#000">Hi!</text></svg>
<svg class="a" style="left:107px;top:472px" width="16" height="16" viewBox="0 0 16 16"><rect x="0.5" y="0.5" width="15" height="15" rx="2" fill="#c4ffff" stroke="#90a0a0"/><text x="8" y="11" text-anchor="middle" font-family="Liberation Sans" font-size="7.5" fill="#000" letter-spacing="-0.3">a+b</text></svg>
<svg class="a" style="left:166px;top:472px" width="16" height="16" viewBox="0 0 16 16"><rect x="0.5" y="0.5" width="15" height="15" rx="2" fill="#e4e4ff" stroke="#9090a8"/><path d="M2.5 8 H7.5 M5.5 6 L7.8 8 L5.5 10" stroke="#000" stroke-width="1" fill="none"/><circle cx="11" cy="8" r="2.2" fill="#000"/></svg>
<svg class="a" style="left:225px;top:472px" width="16" height="16" viewBox="0 0 16 16"><rect x="0.5" y="0.5" width="15" height="15" rx="2" fill="#e4e4ff" stroke="#9090a8"/><circle cx="5" cy="8" r="2.2" fill="#000"/><path d="M8 8 H13 M11 6 L13.3 8 L11 10" stroke="#000" stroke-width="1" fill="none"/></svg>
<svg class="a" style="left:284px;top:472px" width="16" height="16" viewBox="0 0 16 16"><rect x="0.5" y="0.5" width="15" height="15" rx="2" fill="#ffc4ff" stroke="#a890a8"/><text x="8" y="11" text-anchor="middle" font-family="Liberation Sans" font-size="8" fill="#000">dll</text></svg>
<div class="t" style="left:41px;top:493px;font-size:11px">Hello,</div>
<div class="t" style="left:40px;top:506px;font-size:11px">World!</div>
<div class="t" style="left:101px;top:493px;font-size:11px">Fields</div>
<div class="t" style="left:149px;top:493px;font-size:11px">Port write</div>
<div class="t" style="left:209px;top:493px;font-size:11px">Port read</div>
<div class="t" style="left:272px;top:493px;font-size:11px">External</div>
<div class="t" style="left:270px;top:506px;font-size:11px">functions</div>
<!-- status bar -->
<div class="hline" style="left:20px;top:529px;width:762px;background:#fff"></div>
<div class="hline" style="left:20px;top:530px;width:762px;background:#a0a0a0"></div>
<div class="hline" style="left:20px;top:531px;width:762px;background:#fff"></div>
<div class="a" style="left:20px;top:532px;width:762px;height:17px;background:#efebea"></div>
<div class="a" style="left:20px;top:532px;width:18px;height:17px;background:#f0f0f0"></div>
<div class="hline" style="left:20px;top:549px;width:762px;background:#fafafa"></div>
<div class="vline" style="left:38px;top:532px;height:17px;background:#d0d0d0"></div>
<div class="vline" style="left:338px;top:532px;height:17px;background:#d0d0d0"></div>
<svg class="a" style="left:770px;top:538px" width="12" height="12" viewBox="770 538 12 12"><g fill="#fff"><rect x="778" y="540" width="1" height="1"/><rect x="775" y="543" width="1" height="1"/><rect x="778" y="543" width="1" height="1"/><rect x="772" y="546" width="1" height="1"/><rect x="775" y="546" width="1" height="1"/><rect x="778" y="546" width="1" height="1"/></g><g fill="#9a9a9a"><rect x="779" y="541" width="1" height="1.5"/><rect x="776" y="544" width="1" height="1.5"/><rect x="779" y="544" width="1" height="1.5"/><rect x="773" y="547" width="1" height="1.5"/><rect x="776" y="547" width="1" height="1.5"/><rect x="779" y="547" width="1" height="1.5"/></g></svg>
</body></html>
